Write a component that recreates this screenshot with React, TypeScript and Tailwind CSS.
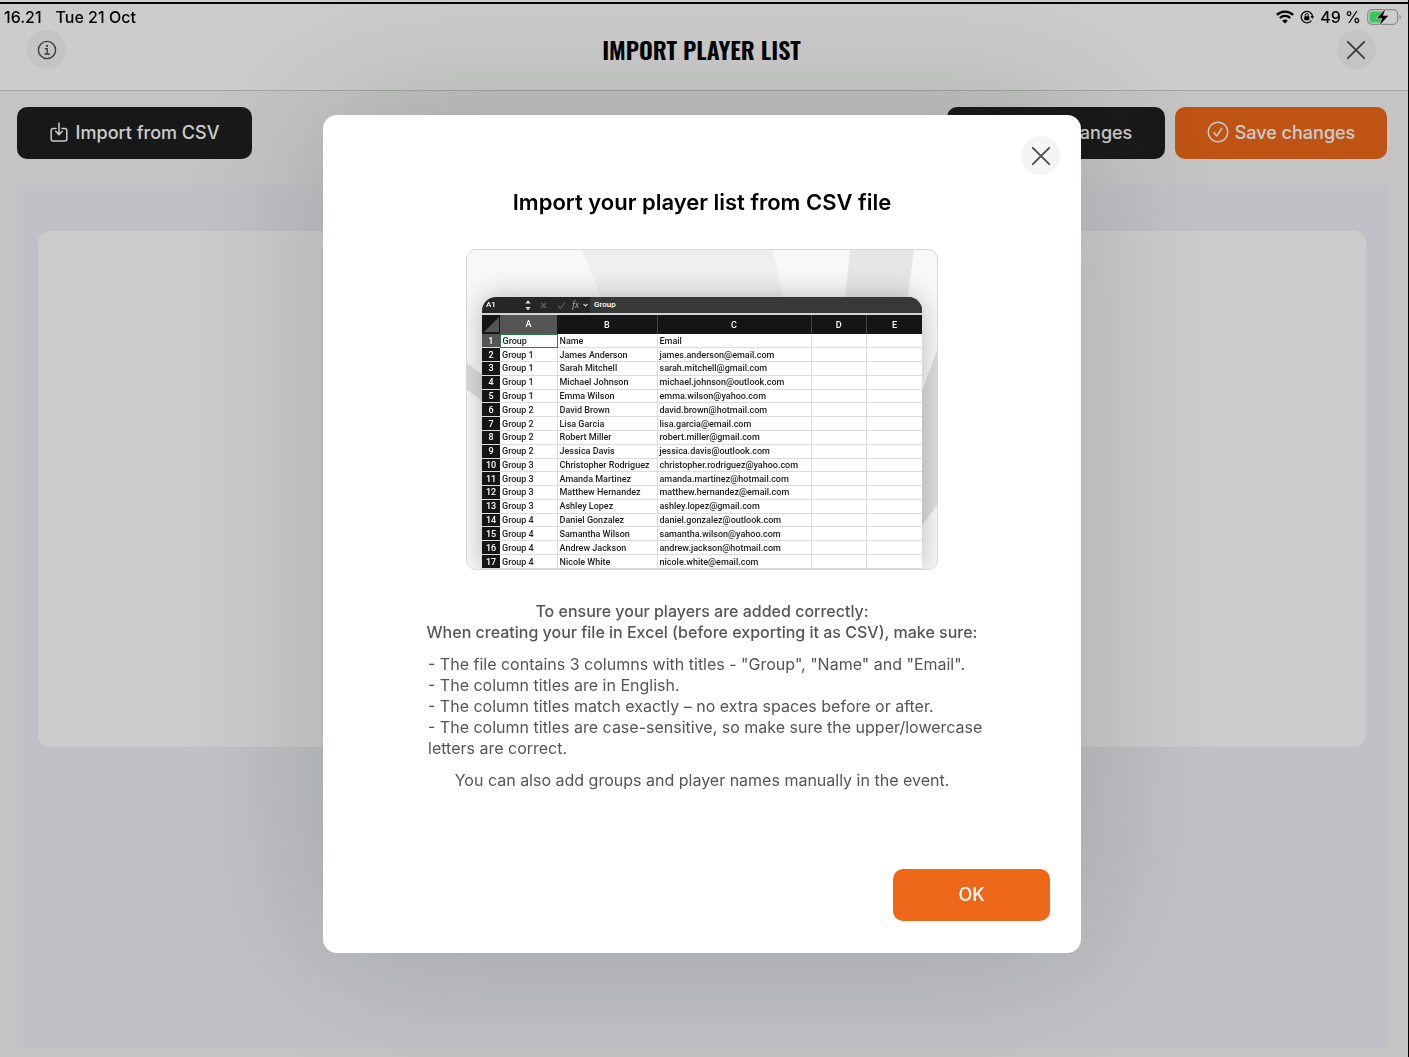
import React from 'react';

interface Player {
    group: string;
    name: string;
    email: string;
}

const SHEET_ROWS: Player[] = [
    { group: 'Group', name: 'Name', email: 'Email' },
    { group: 'Group 1', name: 'James Anderson', email: 'james.anderson@email.com' },
    { group: 'Group 1', name: 'Sarah Mitchell', email: 'sarah.mitchell@gmail.com' },
    { group: 'Group 1', name: 'Michael Johnson', email: 'michael.johnson@outlook.com' },
    { group: 'Group 1', name: 'Emma Wilson', email: 'emma.wilson@yahoo.com' },
    { group: 'Group 2', name: 'David Brown', email: 'david.brown@hotmail.com' },
    { group: 'Group 2', name: 'Lisa Garcia', email: 'lisa.garcia@email.com' },
    { group: 'Group 2', name: 'Robert Miller', email: 'robert.miller@gmail.com' },
    { group: 'Group 2', name: 'Jessica Davis', email: 'jessica.davis@outlook.com' },
    { group: 'Group 3', name: 'Christopher Rodriguez', email: 'christopher.rodriguez@yahoo.com' },
    { group: 'Group 3', name: 'Amanda Martinez', email: 'amanda.martinez@hotmail.com' },
    { group: 'Group 3', name: 'Matthew Hernandez', email: 'matthew.hernandez@email.com' },
    { group: 'Group 3', name: 'Ashley Lopez', email: 'ashley.lopez@gmail.com' },
    { group: 'Group 4', name: 'Daniel Gonzalez', email: 'daniel.gonzalez@outlook.com' },
    { group: 'Group 4', name: 'Samantha Wilson', email: 'samantha.wilson@yahoo.com' },
    { group: 'Group 4', name: 'Andrew Jackson', email: 'andrew.jackson@hotmail.com' },
    { group: 'Group 4', name: 'Nicole White', email: 'nicole.white@email.com' }
];

const RULES = [
    '- The file contains 3 columns with titles - "Group", "Name" and "Email".',
    '- The column titles are in English.',
    '- The column titles match exactly – no extra spaces before or after.',
    '- The column titles are case-sensitive, so make sure the upper/lowercase letters are correct.'
];

const CloseIcon: React.FC = () => (
    <svg width="20" height="20" viewBox="0 0 20 20" fill="none" stroke="#4b4b4b" strokeWidth="1.8" strokeLinecap="round">
        <path d="M1.800 1.800l16.400 16.400M18.200 1.800L1.800 18.200" />
    </svg>
);

const InfoIcon: React.FC = () => (
    <svg width="20" height="20" viewBox="0 0 20 20" fill="none" stroke="#4b4b4b" strokeWidth="1.4" strokeLinecap="round">
        <circle cx="10" cy="10" r="8.6" />
        <path d="M8.300 8.800h1.900v5M7.800 14h4.600" />
        <circle cx="10" cy="5.900" r="1.100" fill="#4b4b4b" stroke="none" />
    </svg>
);

const ImportIcon: React.FC = () => (
    <svg width="18" height="20" viewBox="0 0 18 20" fill="none" stroke="currentColor" strokeWidth="1.5" strokeLinecap="round" strokeLinejoin="round">
        <path d="M6 6.500H3.200C2 6.500 1.200 7.300 1.200 8.500v8.600c0 1.200.8 2 2 2h11.600c1.200 0 2-.8 2-2V8.500c0-1.200-.8-2-2-2H12" />
        <path d="M9 .9v11.400M5.700 9.300L9 12.600l3.300-3.300" />
    </svg>
);

const CheckCircleIcon: React.FC = () => (
    <svg width="22" height="22" viewBox="0 0 22 22" fill="none" stroke="currentColor" strokeWidth="1.5" strokeLinecap="round" strokeLinejoin="round">
        <circle cx="11" cy="11" r="9.800" />
        <path d="M6.900 11.600l2.900 3.400 5.100-7.600" />
    </svg>
);

const UndoIcon: React.FC = () => (
    <svg width="22" height="22" viewBox="0 0 22 22" fill="none" stroke="currentColor" strokeWidth="1.5" strokeLinecap="round" strokeLinejoin="round">
        <path d="M7 3L3 7l4 4M3 7h10a5 5 0 010 10H7" />
    </svg>
);

const WifiIcon: React.FC = () => (
    <svg width="18" height="14" viewBox="0 0 18 14" fill="none" stroke="#000" strokeWidth="2.300">
        <path d="M.9 4.900a11.600 11.600 0 0116.200 0" />
        <path d="M3.800 8a7.400 7.400 0 0110.400 0" />
        <path d="M9 13.600L6.200 10.800a4 4 0 015.600 0z" fill="#000" stroke="none" />
    </svg>
);

const RotationLockIcon: React.FC = () => (
    <svg width="14" height="14" viewBox="0 0 14 14" fill="none" stroke="#000" strokeWidth="1.300">
        <path d="M11.400 10.600A5.700 5.700 0 1112.500 6" />
        <path d="M10.400 6h3.600l-1.700 2.900z" fill="#000" stroke="none" />
        <rect x="4.300" y="6.300" width="5" height="3.900" rx=".6" fill="#000" stroke="none" />
        <path d="M5.300 6.600V5.200a1.500 1.500 0 013 0v1.400" strokeWidth="1" />
    </svg>
);

const BatteryIcon: React.FC = () => (
    <svg width="35" height="18" viewBox="0 0 35 18">
        <rect x=".7" y="1.700" width="30" height="14.600" rx="4.500" fill="none" stroke="#8a8a8a" strokeWidth="1.200" />
        <path d="M32.600 6.500c1.600.7 1.600 4.300 0 5z" fill="#8a8a8a" />
        <path d="M5.500 3.500H15v11H5.500a3 3 0 01-3-3v-5a3 3 0 013-3z" fill="#34c759" />
        <path d="M18.200 1.200L10 10.200h5.200l-2.400 6.900 8.400-9.300h-5.300z" fill="#000" stroke="#ccc" strokeWidth="1.200" paintOrder="stroke" />
    </svg>
);

const StatusBar: React.FC = () => (
    <div className="relative z-20 flex h-[26px] items-center justify-between pl-1 pr-1.5 text-[16px] font-medium leading-5 text-black">
        <div className="flex gap-3.5">
            <span>16.21</span>
            <span>Tue 21 Oct</span>
        </div>
        <div className="flex items-center gap-1.5">
            <WifiIcon />
            <RotationLockIcon />
            <span>49 %</span>
            <BatteryIcon />
        </div>
    </div>
);

const Spreadsheet: React.FC = () => (
    <div className="relative h-[321px] overflow-hidden rounded-[10px] border border-[#d8d8d8] bg-[#f8f8f8] px-[15px] pt-[47px]">
        <svg className="absolute inset-0 h-full w-full" viewBox="0 0 470 319" preserveAspectRatio="none">
            <path d="M115 0h191l13 60H139z" fill="#efefef" />
            <path d="M383 0h64l-8 60h-62z" fill="#e6e6e6" />
            <path d="M470 100v155l-40 55V210z" fill="#dedede" />
            <path d="M0 113l40 30v25L0 140z" fill="#dcdcdc" />
        </svg>
        <div className="relative overflow-hidden rounded-t-[14px] font-[Roboto,sans-serif] shadow-[0_0_28px_rgba(0,0,0,0.25)]">
            <div className="flex h-4 items-center bg-[#262626] pl-1 text-[8px] font-medium leading-3 text-white">
                <span className="w-[38px]">A1</span>
                <svg className="mr-1.5" width="42" height="14" viewBox="0 0 42 14" fill="none" strokeWidth="1.100">
                    <path d="M1.500 5.500l2.500-3.500 2.500 3.500zM1.500 9l2.500 3.500L6.500 9z" fill="#ddd" />
                    <path d="M17 5l5 5M22 5l-5 5M34 8l2.500 2.500L41 4.500" stroke="#666" />
                </svg>
                <span className="w-[11px] font-[Liberation_Serif,serif] text-[10px] font-normal italic text-[#aaa]">fx</span>
                <svg className="mr-0.5" width="5" height="4" viewBox="0 0 5 4" fill="none" stroke="#ccc" strokeWidth="1.200">
                    <path d="M.5 1l2 2 2-2" />
                </svg>
                <span className="flex h-full flex-1 items-center bg-[#383838] pl-1">Group</span>
            </div>
            <table className="h-[256px] w-full table-fixed border-collapse bg-white text-left text-[9px] font-medium leading-[10px] text-[#1c1c1c]">
                <colgroup>
                    <col className="w-[18px]" />
                    <col className="w-[57px]" />
                    <col className="w-[100px]" />
                    <col className="w-[154px]" />
                    <col />
                    <col />
                </colgroup>
                <thead>
                    <tr className="h-5 border-t-2 border-[#d4d4d4] bg-[#151515] text-center text-white">
                        <td className="p-0">
                            <svg className="ml-auto" width="17" height="17" viewBox="0 0 17 17">
                                <path d="M16 1v15H1z" fill="#555" />
                            </svg>
                        </td>
                        <th className="bg-[#555] p-0 font-medium">A</th>
                        <th className="border-r border-[#444] p-0 font-medium">B</th>
                        <th className="border-r border-[#444] p-0 font-medium">C</th>
                        <th className="border-r border-[#444] p-0 font-medium">D</th>
                        <th className="p-0 font-medium">E</th>
                    </tr>
                </thead>
                <tbody>
                    {SHEET_ROWS.map((row, index) => (
                        <tr key={row.email} className="border-b border-[#dcdcdc]">
                            <th className={`p-0 text-center font-medium text-white ${index === 0 ? 'bg-[#555]' : 'bg-[#151515]'}`}>
                                {index + 1}
                            </th>
                            <td className={`whitespace-nowrap p-0 pl-0.5 ${index === 0 ? 'border border-[#2f7d46]' : 'border-r border-[#dcdcdc]'}`}>
                                {row.group}
                            </td>
                            <td className="whitespace-nowrap border-r border-[#dcdcdc] p-0 pl-0.5">{row.name}</td>
                            <td className="whitespace-nowrap border-r border-[#dcdcdc] p-0 pl-0.5">{row.email}</td>
                            <td className="border-r border-[#dcdcdc] p-0" />
                            <td className="p-0" />
                        </tr>
                    ))}
                </tbody>
            </table>
        </div>
    </div>
);

const ImportDialog: React.FC = () => (
    <div className="fixed inset-0 z-10 flex items-center justify-center bg-black/20 pr-[5px] pt-[11px]">
        <div
            role="dialog"
            aria-modal="true"
            aria-labelledby="import-title"
            className="w-full max-w-[758px] rounded-[14px] bg-white pb-8 shadow-[0_0_160px_rgba(0,35,10,0.2)]"
        >
            <div className="flex justify-end pr-[21px] pt-[21px]">
                <button type="button" aria-label="Close dialog" className="flex h-[39px] w-[39px] items-center justify-center rounded-full bg-[#f5f5f5]">
                    <CloseIcon />
                </button>
            </div>
            <h2 id="import-title" className="mt-3 text-center text-[22px] font-semibold leading-[30px] text-black">
                Import your player list from CSV file
            </h2>
            <div className="mx-auto mt-8 w-[472px]">
                <Spreadsheet />
            </div>
            <div className="mt-[31px] text-[16px] leading-[21px] text-[#555]">
                <p className="text-center font-medium">
                    To ensure your players are added correctly:
                    <br />
                    When creating your file in Excel (before exporting it as CSV), make sure:
                </p>
                <ul className="ml-[105px] mr-[93px] mt-[11px]">
                    {RULES.map(rule => (
                        <li key={rule}>{rule}</li>
                    ))}
                </ul>
                <p className="mt-[11px] text-center">You can also add groups and player names manually in the event.</p>
            </div>
            <div className="mt-[78px] flex justify-end pr-[31px]">
                <button type="button" className="h-[52px] w-[157px] rounded-[10px] bg-[#ee6819] pb-0.5 text-[18px] font-medium text-white">
                    OK
                </button>
            </div>
        </div>
    </div>
);

const App: React.FC = () => (
    <div className="flex min-h-screen flex-col border-r border-black bg-[#f5f5f5] font-[Inter,sans-serif]">
        <header className="border-b border-[#d0d0d0] bg-white">
            <div className="mt-0.5 h-0.5 bg-black" />
            <StatusBar />
            <div className="flex h-[60px] items-start justify-between pl-[27px] pr-8">
                <button type="button" aria-label="Information" className="flex h-[39px] w-[39px] items-center justify-center rounded-full bg-[#f5f5f5]">
                    <InfoIcon />
                </button>
                <h1 className="pt-1 font-[Oswald,sans-serif] text-[24px] font-semibold leading-[30px] text-black">
                    IMPORT PLAYER LIST
                </h1>
                <button type="button" aria-label="Close" className="flex h-[39px] w-[39px] items-center justify-center rounded-full bg-[#f5f5f5]">
                    <CloseIcon />
                </button>
            </div>
        </header>
        <main className="flex flex-1 flex-col pb-[9px] pl-[17px] pr-[21px] pt-4">
            <div className="flex gap-2.5 text-[18px] font-medium text-white">
                <button type="button" className="mr-auto flex h-[52px] w-[235px] items-center justify-center gap-2 rounded-[10px] bg-[#1f1f1f] pb-0.5">
                    <ImportIcon />
                    Import from CSV
                </button>
                <button type="button" className="flex h-[52px] w-[218px] items-center justify-center gap-1.5 rounded-[10px] bg-[#1f1f1f] pb-0.5">
                    <UndoIcon />
                    Undo changes
                </button>
                <button type="button" className="flex h-[52px] w-[212px] items-center justify-center gap-1.5 rounded-[10px] bg-[#ee6819] pb-0.5">
                    <CheckCircleIcon />
                    Save changes
                </button>
            </div>
            <section className="mt-[26px] flex-1 bg-[#f2f1f8] px-[21px] pt-[46px]">
                <div className="h-[516px] rounded-[12px] bg-white" />
            </section>
        </main>
        <ImportDialog />
    </div>
);

export default App;
